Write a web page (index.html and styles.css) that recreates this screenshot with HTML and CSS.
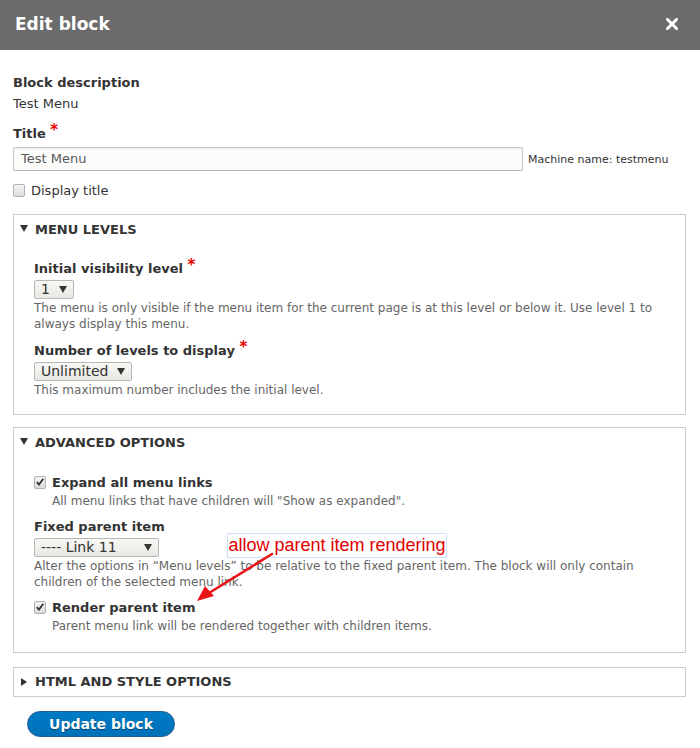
FILE: index.html
```html
<!DOCTYPE html>
<html>
<head>
<meta charset="utf-8">
<link rel="stylesheet" href="styles.css">
</head>
<body>
<div class="dialog">
  <div class="titlebar">
    <span class="dialog-title">Edit block</span>
    <svg class="close" width="12" height="12" viewBox="0 0 12 12"><path d="M1.5 1.5 L10.5 10.5 M10.5 1.5 L1.5 10.5" stroke="#fff" stroke-width="3" stroke-linecap="square"/></svg>
  </div>
  <div class="content">
    <div class="label">Block description</div>
    <div class="value">Test Menu</div>

    <div class="label title-label">Title <span class="req">*</span></div>
    <div class="title-row">
      <div class="text-input">Test Menu</div>
      <span class="machine">Machine name: testmenu</span>
    </div>
    <div class="check-row display-title">
      <span class="checkbox"></span><span class="check-text">Display title</span>
    </div>

    <div class="fieldset fs-levels">
      <div class="legend"><span class="tri-down"></span>MENU LEVELS</div>
      <div class="fs-body">
        <div class="label l-first">Initial visibility level <span class="req">*</span></div>
        <div class="select sel-1"><span>1</span><span class="arrow"></span></div>
        <div class="desc">The menu is only visible if the menu item for the current page is at this level or below it. Use level 1 to always display this menu.</div>
        <div class="label l-next">Number of levels to display <span class="req">*</span></div>
        <div class="select sel-unl"><span>Unlimited</span><span class="arrow"></span></div>
        <div class="desc">This maximum number includes the initial level.</div>
      </div>
    </div>

    <div class="fieldset fs-adv">
      <div class="legend"><span class="tri-down"></span>ADVANCED OPTIONS</div>
      <div class="fs-body">
        <div class="check-row l-first-adv">
          <span class="checkbox checked"><svg width="10" height="10" viewBox="0 0 10 10"><path d="M1.8 5.2 L4 7.6 L8.3 1.8" fill="none" stroke="#333" stroke-width="1.8"/></svg></span><span class="check-label">Expand all menu links</span>
        </div>
        <div class="desc indent">All menu links that have children will "Show as expanded".</div>
        <div class="label l-next">Fixed parent item</div>
        <div class="select sel-link"><span>---- Link 11</span><span class="arrow"></span></div>
        <div class="desc">Alter the options in “Menu levels” to be relative to the fixed parent item. The block will only contain children of the selected menu link.</div>
        <div class="check-row l-next">
          <span class="checkbox checked"><svg width="10" height="10" viewBox="0 0 10 10"><path d="M1.8 5.2 L4 7.6 L8.3 1.8" fill="none" stroke="#333" stroke-width="1.8"/></svg></span><span class="check-label">Render parent item</span>
        </div>
        <div class="desc indent">Parent menu link will be rendered together with children items.</div>
      </div>
    </div>

    <div class="fieldset fs-html">
      <div class="legend"><span class="tri-right"></span>HTML AND STYLE OPTIONS</div>
    </div>

    <div class="actions">
      <span class="button">Update block</span>
    </div>
  </div>

  <div class="note">allow parent item rendering</div>
  <svg class="note-arrow" width="100" height="60" viewBox="0 0 100 60">
    <path d="M77 4 L14 43" stroke="#e8141a" stroke-width="2.6" stroke-linecap="round"/>
    <path d="M2 51 L10 36 L19 46 Z" fill="#e8141a"/>
  </svg>
</div>
</body>
</html>
```

FILE: styles.css
```css
html, body {
  margin: 0;
  padding: 0;
  background: #fff;
}
body {
  font-family: "DejaVu Sans", "Noto Sans", sans-serif;
  color: #333;
  font-size: 13px;
}
.dialog {
  position: relative;
  width: 700px;
  height: 748px;
  overflow: hidden;
}
.titlebar {
  height: 50px;
  background: #6b6b6b;
  display: flex;
  align-items: center;
  justify-content: space-between;
  padding: 0 22px 0 15px;
}
.dialog-title {
  color: #fff;
  font-weight: bold;
  font-size: 17px;
  margin-top: -2px;
}
.close {
  margin-top: -3px;
}
.content {
  padding: 24px 14px 0 13px;
}
.label {
  font-weight: bold;
  font-size: 13px;
  line-height: 18px;
  color: #333;
}
.req {
  color: #e00;
  font-size: 15px;
  position: relative;
  top: -3px;
}
.value {
  margin-top: 3px;
  line-height: 18px;
  font-size: 13px;
}
.title-label {
  margin-top: 11px;
}
.title-row {
  display: flex;
  align-items: center;
  margin-top: 4px;
}
.text-input {
  width: 501px;
  height: 22px;
  border: 1px solid #c8c8c8;
  border-bottom-color: #b3b3b3;
  border-radius: 2px;
  background: #fcfcfa;
  box-shadow: inset 0 1px 2px rgba(0,0,0,0.08);
  padding-left: 7px;
  line-height: 22px;
  font-size: 13px;
  color: #595959;
}
.machine {
  font-size: 11px;
  margin-left: 5px;
  color: #333;
}
.check-row {
  display: flex;
  align-items: center;
  line-height: 18px;
}
.display-title {
  margin-top: 11px;
}
.checkbox {
  width: 10px;
  height: 11px;
  border: 1px solid #b2b2b2;
  border-radius: 2px;
  background: linear-gradient(#f4f4f4, #dcdcdc);
  display: inline-flex;
  align-items: center;
  justify-content: center;
  margin-right: 6px;
  margin-top: -2px;
}
.check-text {
  font-size: 13px;
  color: #333;
}
.check-label {
  font-weight: bold;
  font-size: 13px;
}
.fieldset {
  border: 1px solid #cccccc;
}
.fs-levels {
  margin-top: 14px;
  padding: 6px 0 16px 0;
}
.fs-adv {
  margin-top: 12px;
  padding: 6px 0 18px 0;
}
.fs-html {
  margin-top: 14px;
  padding: 5px 0 5px 0;
}
.legend {
  display: flex;
  align-items: center;
  padding-left: 6px;
  font-weight: bold;
  font-size: 13px;
  line-height: 18px;
  color: #333;
}
.tri-down {
  width: 0;
  height: 0;
  border-left: 4px solid transparent;
  border-right: 4px solid transparent;
  border-top: 7px solid #333;
  margin-right: 7px;
  margin-top: -3px;
}
.tri-right {
  width: 0;
  height: 0;
  border-top: 4px solid transparent;
  border-bottom: 4px solid transparent;
  border-left: 6px solid #333;
  margin-left: 1px;
  margin-right: 8px;
}
.fs-body {
  padding: 0 20px 0 20px;
}
.l-first {
  margin-top: 20px;
}
.l-first-adv {
  margin-top: 22px;
}
.l-next {
  margin-top: 9px;
}
.select {
  display: inline-flex;
  align-items: center;
  justify-content: space-between;
  height: 17px;
  margin-top: 2px;
  border: 1px solid #b8b8b8;
  border-radius: 2px;
  background: linear-gradient(#f7f7f4, #e8e8e3);
  font-size: 14px;
  color: #333;
  padding: 0 6px 0 6px;
  box-sizing: content-box;
}
.sel-1 { width: 26px; }
.sel-unl { width: 84px; }
.sel-link { width: 111px; }
.select span:first-child {
  line-height: 17px;
}
.arrow {
  width: 0;
  height: 0;
  border-left: 4px solid transparent;
  border-right: 4px solid transparent;
  border-top: 7px solid #333;
}
.desc {
  font-size: 12px;
  line-height: 16px;
  color: #666;
  margin-top: 1px;
}
.indent {
  padding-left: 18px;
}
.actions {
  padding: 14px 0 0 14px;
}
.button {
  display: inline-block;
  width: 146px;
  height: 24px;
  line-height: 24px;
  text-align: center;
  border: 1px solid #1e5c90;
  border-radius: 14px;
  background: linear-gradient(#007bc6, #0071b8);
  color: #fff;
  font-weight: bold;
  font-size: 14px;
  text-shadow: 0 1px 1px rgba(0,0,0,0.4);
}
.note {
  position: absolute;
  left: 227px;
  top: 533px;
  width: 218px;
  height: 23px;
  border: 1px solid #cfe0f6;
  font-family: "Liberation Sans", Arial, sans-serif;
  font-size: 18px;
  line-height: 23px;
  color: #e00000;
  text-align: center;
  background: #fff;
}
.note-arrow {
  position: absolute;
  left: 195px;
  top: 550px;
}
```
